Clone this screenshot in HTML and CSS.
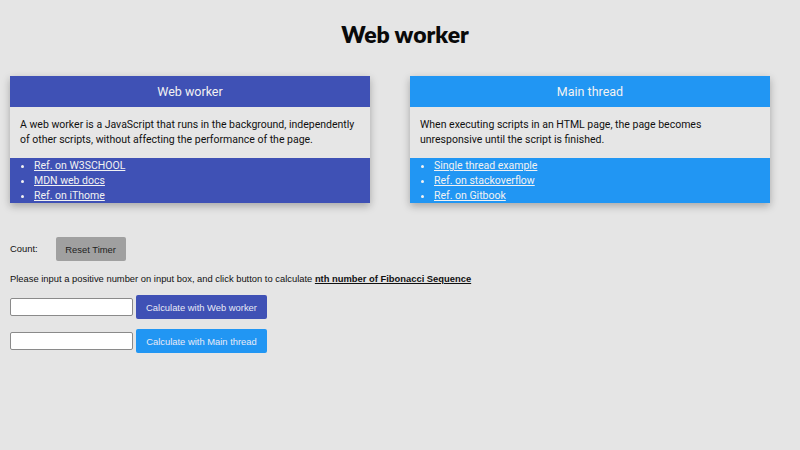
FILE: index.html
```html
<!DOCTYPE html>
<html lang="en">
<head>
<meta charset="utf-8">
<title>Web worker</title>
<link rel="stylesheet" href="styles.css">
</head>
<body>
  <h1 class="title">Web worker</h1>
  <div class="cards">
    <section class="card card-worker">
      <header class="card-head">Web worker</header>
      <p class="card-body">A web worker is a JavaScript that runs in the background, independently of other scripts, without affecting the performance of the page.</p>
      <ul class="card-links">
        <li><a href="#">Ref. on W3SCHOOL</a></li>
        <li><a href="#">MDN web docs</a></li>
        <li><a href="#">Ref. on iThome</a></li>
      </ul>
    </section>
    <section class="card card-main">
      <header class="card-head">Main thread</header>
      <p class="card-body">When executing scripts in an HTML page, the page becomes unresponsive until the script is finished.</p>
      <ul class="card-links">
        <li><a href="#">Single thread example</a></li>
        <li><a href="#">Ref. on stackoverflow</a></li>
        <li><a href="#">Ref. on Gitbook</a></li>
      </ul>
    </section>
  </div>
  <div class="controls">
    <div class="timer-row">
      <span class="count">Count: </span>
      <button class="btn btn-reset">Reset Timer</button>
    </div>
    <p class="hint">Please input a positive number on input box, and click button to calculate <a href="#" class="hint-link">nth number of Fibonacci Sequence</a></p>
    <div class="calc-row">
      <input type="text" class="num-input">
      <button class="btn btn-worker">Calculate with Web worker</button>
    </div>
    <div class="calc-row">
      <input type="text" class="num-input">
      <button class="btn btn-main">Calculate with Main thread</button>
    </div>
  </div>
</body>
</html>
```
FILE: styles.css
```css
html, body {
  margin: 0;
  padding: 0;
}

body {
  background: #e5e5e5;
  font-family: "Liberation Sans", Arial, sans-serif;
  color: #111;
  padding: 0 0 0 10px;
}

.title {
  margin: 0;
  padding-top: 19px;
  height: 76px;
  box-sizing: border-box;
  text-align: center;
  font-family: Lato, "Open Sans", sans-serif;
  font-weight: 800;
  font-size: 23px;
  line-height: 30px;
  color: #0a0a0a;
}

.cards {
  width: 760px;
  display: flex;
  justify-content: space-between;
}

.card {
  width: 360px;
  box-shadow: 0 3px 8px rgba(0, 0, 0, 0.28);
  font-family: Roboto, "Noto Sans", sans-serif;
}

.card-worker .card-head,
.card-worker .card-links { background: #3f51b5; }

.card-main .card-head,
.card-main .card-links { background: #2196f3; }

.card-head {
  height: 31px;
  line-height: 32px;
  text-align: center;
  color: #f2f2f2;
  font-size: 12.5px;
}

.card-body {
  margin: 0;
  background: #e6e6e6;
  padding: 10px 10px 11px;
  font-size: 10.5px;
  line-height: 15px;
  color: #111;
  height: 51px;
  box-sizing: border-box;
}

.card-links {
  margin: 0;
  padding: 0 0 0 24px;
  list-style: disc;
  color: #f2f2f2;
  font-size: 10.5px;
  line-height: 15px;
  height: 45px;
}

.card-links a {
  color: #f2f2f2;
}

.controls {
  padding-top: 34px;
  font-size: 9.4px;
}

.timer-row {
  display: flex;
  align-items: center;
  gap: 18px;
}

.count {
  position: relative;
  top: -1px;
}

.btn {
  border: none;
  border-radius: 2px;
  font-family: "Liberation Sans", Arial, sans-serif;
  font-size: 9.4px;
  white-space: nowrap;
  padding: 0;
}

.btn-reset {
  background: #a0a0a0;
  color: #222;
  width: 70px;
  height: 24px;
}

.hint {
  margin: 11px 0 0;
  line-height: 13px;
}

.hint-link {
  color: #111;
  font-weight: bold;
}

.calc-row {
  display: flex;
  align-items: center;
  gap: 3px;
  margin-top: 10px;
}

.calc-row + .calc-row {
  margin-top: 10px;
}

.num-input {
  width: 123px;
  height: 18px;
  box-sizing: border-box;
  border: 1px solid #8a8a8a;
  border-radius: 2px;
  background: #fff;
  padding: 0 3px;
  margin: 0;
}

.btn-worker,
.btn-main {
  color: #e8eaf6;
  width: 131px;
  height: 24px;
}

.btn-worker { background: #3f51b5; }
.btn-main { background: #2196f3; }
```
